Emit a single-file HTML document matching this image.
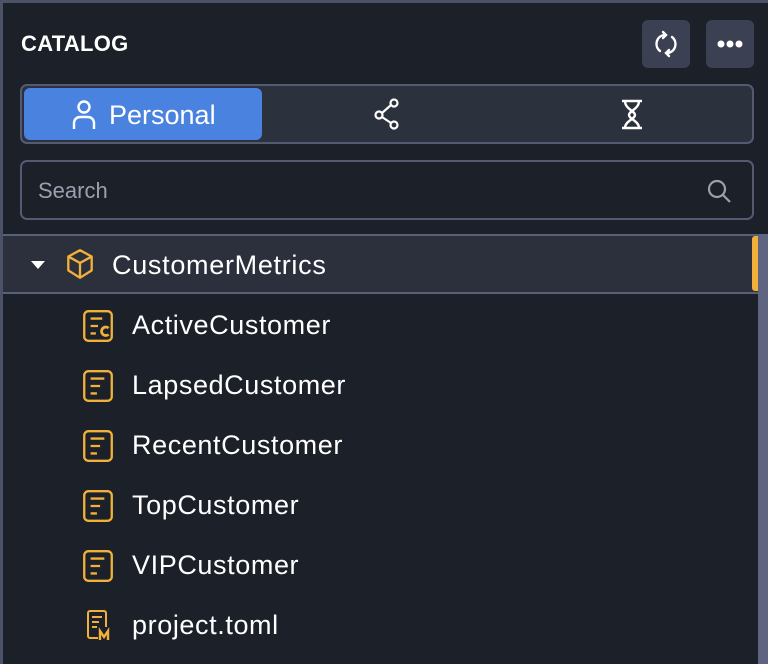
<!DOCTYPE html>
<html><head><style>
*{margin:0;padding:0;box-sizing:border-box}
body{width:768px;height:664px;background:#1b2029;overflow:hidden;position:relative;font-family:"Liberation Sans",sans-serif;color:#fff}
.a{position:absolute}
.t{position:absolute;left:132px;top:4px;font-size:27px;white-space:nowrap;letter-spacing:0.6px}
</style></head><body>
<div class="a" style="left:0;top:0;width:768px;height:3px;background:#4c5268"></div>
<div class="a" style="left:0;top:0;width:3px;height:664px;background:#4c5268"></div>
<div class="a" style="left:21px;top:31px;font-size:22px;font-weight:bold;letter-spacing:0.3px">CATALOG</div>
<div class="a" style="left:642px;top:20px;width:48px;height:48px;background:#3b4052;border-radius:6px">
<svg width="48" height="48" viewBox="0 0 48 48" fill="none" stroke="#fff" stroke-width="2.4" stroke-linecap="round"><path d="M18 31a9 9 0 0 1 4-16M30 17a9 9 0 0 1-4 16"/><path d="M21 12l3 3-3 3M27 30l-3 3 3 3"/></svg></div>
<div class="a" style="left:706px;top:20px;width:48px;height:48px;background:#3b4052;border-radius:6px">
<svg width="48" height="48"><circle cx="15" cy="24" r="3.5" fill="#fff"/><circle cx="24" cy="24" r="3.5" fill="#fff"/><circle cx="33" cy="24" r="3.5" fill="#fff"/></svg></div>
<div class="a" style="left:20px;top:84px;width:734px;height:60px;background:#2c313e;border:2px solid #535a72;border-radius:7px"></div>
<div class="a" style="left:24px;top:88px;width:238px;height:52px;background:#4a82df;border-radius:6px"></div>
<svg class="a" style="left:68px;top:98px" width="32" height="32" viewBox="0 0 32 32" fill="none" stroke="#fff" stroke-width="2.4"><circle cx="16" cy="9" r="5.5"/><path d="M6 31v-6a6 6 0 0 1 6-6h8a6 6 0 0 1 6 6v6"/></svg>
<div class="a" style="left:109px;top:100px;font-size:27px">Personal</div>
<svg class="a" style="left:370px;top:98px" width="34" height="34" viewBox="0 0 34 34" fill="none" stroke="#fff" stroke-width="2.2"><circle cx="24" cy="5" r="3.5"/><circle cx="9" cy="17" r="3.5"/><circle cx="24" cy="27" r="3.5"/><path d="M21 7L12 15M12 19l9 6"/></svg>
<svg class="a" style="left:618px;top:98px" width="28" height="34" viewBox="0 0 28 34" fill="none" stroke="#fff" stroke-width="2.4"><path d="M4 3h20M4 30h20M7 3c0 8 10 10 10 14s-10 6-10 13M21 3c0 8-10 10-10 14s10 6 10 13"/></svg>
<div class="a" style="left:20px;top:160px;width:734px;height:60px;border:2px solid #535a72;border-radius:7px"></div>
<div class="a" style="left:38px;top:178px;font-size:22px;color:#9aa0ad">Search</div>
<svg class="a" style="left:704px;top:176px" width="30" height="30" viewBox="0 0 30 30" fill="none" stroke="#9aa0ad" stroke-width="2.2"><circle cx="13" cy="13" r="8"/><path d="M19 19l7 7"/></svg>
<div class="a" style="left:3px;top:234px;width:755px;height:2px;background:#5a6078"></div>
<div class="a" style="left:3px;top:236px;width:755px;height:56px;background:#2b303c"></div>
<div class="a" style="left:3px;top:292px;width:755px;height:2px;background:#5a6078"></div>
<div class="a" style="left:758px;top:234px;width:10px;height:430px;background:#5f6580"></div>
<div class="a" style="left:752px;top:236px;width:6px;height:55px;background:#f0b03a;border-radius:3px 0 0 3px"></div>
<svg class="a" style="left:30px;top:258px" width="16" height="14"><path d="M1 3h14L8 11z" fill="#fff"/></svg>
<svg class="a" style="left:63px;top:247px" width="34" height="34" viewBox="0 0 32 32" fill="none" stroke="#f0b03a" stroke-width="2.2" stroke-linejoin="round"><path d="M16 3l11 6v13l-11 7-11-7V9z M5 9l11 6 11-6M16 15v14"/></svg>
<div class="a" style="left:112px;top:250px;font-size:27px;letter-spacing:0.7px">CustomerMetrics</div>
<div style="position:absolute;left:0;top:306px">
<svg class="a" style="left:81px;top:2px" width="34" height="36" viewBox="0 0 32 34" fill="none" stroke="#f0b03a" stroke-width="2.2"><rect x="3" y="3" width="26" height="28" rx="4"/><path d="M9 10h11M9 17h7M9 24h5"/><path d="M26 19a4 4 0 1 0 0 6" stroke-width="2.6"/></svg>
<div class="t">ActiveCustomer</div>
</div>
<div style="position:absolute;left:0;top:366px">
<svg class="a" style="left:81px;top:2px" width="34" height="36" viewBox="0 0 32 34" fill="none" stroke="#f0b03a" stroke-width="2.2"><rect x="3" y="3" width="26" height="28" rx="4"/><path d="M9 10h13M9 17h9M9 24h6"/></svg>
<div class="t">LapsedCustomer</div></div>
<div style="position:absolute;left:0;top:426px">
<svg class="a" style="left:81px;top:2px" width="34" height="36" viewBox="0 0 32 34" fill="none" stroke="#f0b03a" stroke-width="2.2"><rect x="3" y="3" width="26" height="28" rx="4"/><path d="M9 10h13M9 17h9M9 24h6"/></svg>
<div class="t">RecentCustomer</div></div>
<div style="position:absolute;left:0;top:486px">
<svg class="a" style="left:81px;top:2px" width="34" height="36" viewBox="0 0 32 34" fill="none" stroke="#f0b03a" stroke-width="2.2"><rect x="3" y="3" width="26" height="28" rx="4"/><path d="M9 10h13M9 17h9M9 24h6"/></svg>
<div class="t">TopCustomer</div></div>
<div style="position:absolute;left:0;top:546px">
<svg class="a" style="left:81px;top:2px" width="34" height="36" viewBox="0 0 32 34" fill="none" stroke="#f0b03a" stroke-width="2.2"><rect x="3" y="3" width="26" height="28" rx="4"/><path d="M9 10h13M9 17h9M9 24h6"/></svg>
<div class="t">VIPCustomer</div></div>
<div style="position:absolute;left:0;top:606px">
<svg class="a" style="left:84px;top:2px" width="32" height="36" viewBox="0 0 32 36" fill="none" stroke="#f0b03a" stroke-width="2"><path d="M14 30H6a2 2 0 0 1-2-2V5a2 2 0 0 1 2-2h14a2 2 0 0 1 2 2v14"/><path d="M8 9h10M8 14h7M8 19h5"/><path d="M16 32v-9l4 6 4-6v9" stroke-width="2.4"/></svg>
<div class="t">project.toml</div></div>
</body></html>
